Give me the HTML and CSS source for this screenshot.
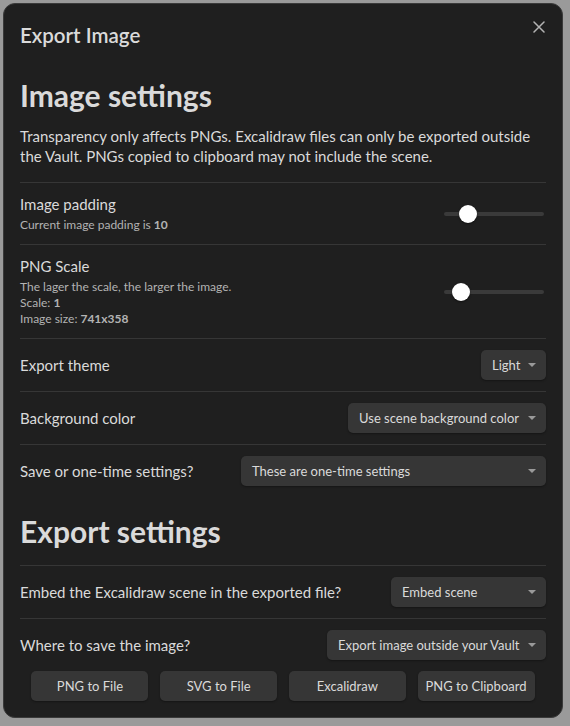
FILE: index.html
```html
<!DOCTYPE html>
<html lang="en">
<head>
<meta charset="utf-8">
<title>Export Image</title>
<link rel="stylesheet" href="styles.css">
</head>
<body>
<div class="modal">
  <button class="close" aria-label="Close">
    <svg width="12" height="12" viewBox="0 0 12 12"><path d="M1 1 L11 11 M11 1 L1 11" stroke="#b3b3b3" stroke-width="1.5" fill="none" stroke-linecap="round"/></svg>
  </button>
  <div class="modal-title">Export Image</div>

  <h1 class="section first">Image settings</h1>
  <p class="intro">Transparency only affects PNGs. Excalidraw files can only be exported outside the Vault. PNGs copied to clipboard may not include the scene.</p>

  <div class="setting">
    <div class="info">
      <div class="name">Image padding</div>
      <div class="desc">Current image padding is <b>10</b></div>
    </div>
    <div class="slider"><div class="track"></div><div class="thumb" style="left:15px"></div></div>
  </div>

  <div class="setting">
    <div class="info">
      <div class="name">PNG Scale</div>
      <div class="desc">The lager the scale, the larger the image.<br>Scale: <b>1</b><br>Image size: <b>741x358</b></div>
    </div>
    <div class="slider"><div class="track"></div><div class="thumb" style="left:8px"></div></div>
  </div>

  <div class="setting">
    <div class="info"><div class="name">Export theme</div></div>
    <div class="select w-theme">Light</div>
  </div>

  <div class="setting">
    <div class="info"><div class="name">Background color</div></div>
    <div class="select w-bg">Use scene background color</div>
  </div>

  <div class="setting">
    <div class="info"><div class="name">Save or one-time settings?</div></div>
    <div class="select w-save">These are one-time settings</div>
  </div>

  <h1 class="section">Export settings</h1>

  <div class="setting">
    <div class="info"><div class="name">Embed the Excalidraw scene in the exported file?</div></div>
    <div class="select w-embed">Embed scene</div>
  </div>

  <div class="setting">
    <div class="info"><div class="name">Where to save the image?</div></div>
    <div class="select w-where">Export image outside your Vault</div>
  </div>

  <div class="actions">
    <button class="btn">PNG to File</button>
    <button class="btn">SVG to File</button>
    <button class="btn">Excalidraw</button>
    <button class="btn">PNG to Clipboard</button>
  </div>
</div>
</body>
</html>
```

FILE: styles.css
```css
html, body {
  margin: 0;
  padding: 0;
}
body {
  background: #9a9a9a;
  width: 570px;
  height: 726px;
  overflow: hidden;
  font-family: Lato, "Liberation Sans", sans-serif;
}
.modal {
  position: relative;
  box-sizing: border-box;
  width: 560px;
  margin: 3px 0 0 3px;
  padding: 16px;
  background: #1f1f1f;
  border: 1px solid #3a3a3a;
  border-radius: 12px;
  color: #dadada;
}
.close {
  position: absolute;
  top: 13px;
  right: 13px;
  width: 20px;
  height: 20px;
  padding: 0;
  border: none;
  background: transparent;
  display: flex;
  align-items: center;
  justify-content: center;
}
.modal-title {
  font-size: 20.5px;
  font-weight: 600;
  line-height: 30px;
}
.section {
  font-size: 30px;
  font-weight: 700;
  line-height: 36px;
  margin: 16px 0 16px;
  color: #dadada;
}
.section.first {
  margin: 27px 0 14px;
}
.intro {
  font-size: 15px;
  line-height: 19.5px;
  margin: 0 0 16px;
}
.setting {
  display: flex;
  align-items: center;
  gap: 16px;
  border-top: 1px solid #363636;
  padding: 11px 0;
}
.info {
  flex: 1 1 auto;
}
.name {
  font-size: 15px;
  line-height: 20px;
}
.desc {
  font-size: 12px;
  line-height: 16px;
  margin-top: 3px;
  color: #b3b3b3;
}
.desc b {
  font-weight: 700;
}
.slider {
  position: relative;
  width: 100px;
  height: 18px;
  margin-right: 2px;
  flex: none;
}
.track {
  position: absolute;
  left: 0;
  right: 0;
  top: 7px;
  height: 4px;
  border-radius: 2px;
  background: #3a3a3a;
}
.thumb {
  position: absolute;
  top: 0;
  width: 18px;
  height: 18px;
  border-radius: 50%;
  background: #ffffff;
  box-shadow: 0 1px 2px rgba(0, 0, 0, 0.5);
}
.select {
  position: relative;
  flex: none;
  box-sizing: border-box;
  height: 30px;
  padding: 0 28px 0 11px;
  display: flex;
  align-items: center;
  font-size: 13px;
  color: #dadada;
  background: #363636;
  border-radius: 5px;
  box-shadow: 0 1px 2px rgba(0, 0, 0, 0.35);
  white-space: nowrap;
}
.select::after {
  content: "";
  position: absolute;
  right: 10px;
  top: 13px;
  border-left: 4px solid transparent;
  border-right: 4px solid transparent;
  border-top: 4px solid #9a9a9a;
}
.w-theme { width: 65px; }
.w-bg { width: 198px; }
.w-save { width: 305px; }
.w-embed { width: 155px; }
.w-where { width: 219px; }
.actions {
  display: flex;
  justify-content: center;
  gap: 11.7px;
}
.btn {
  box-sizing: border-box;
  width: 117px;
  height: 30px;
  padding: 0;
  border: none;
  border-radius: 5px;
  background: #363636;
  color: #dadada;
  font-family: inherit;
  font-size: 13px;
  box-shadow: 0 1px 2px rgba(0, 0, 0, 0.35);
}
```
